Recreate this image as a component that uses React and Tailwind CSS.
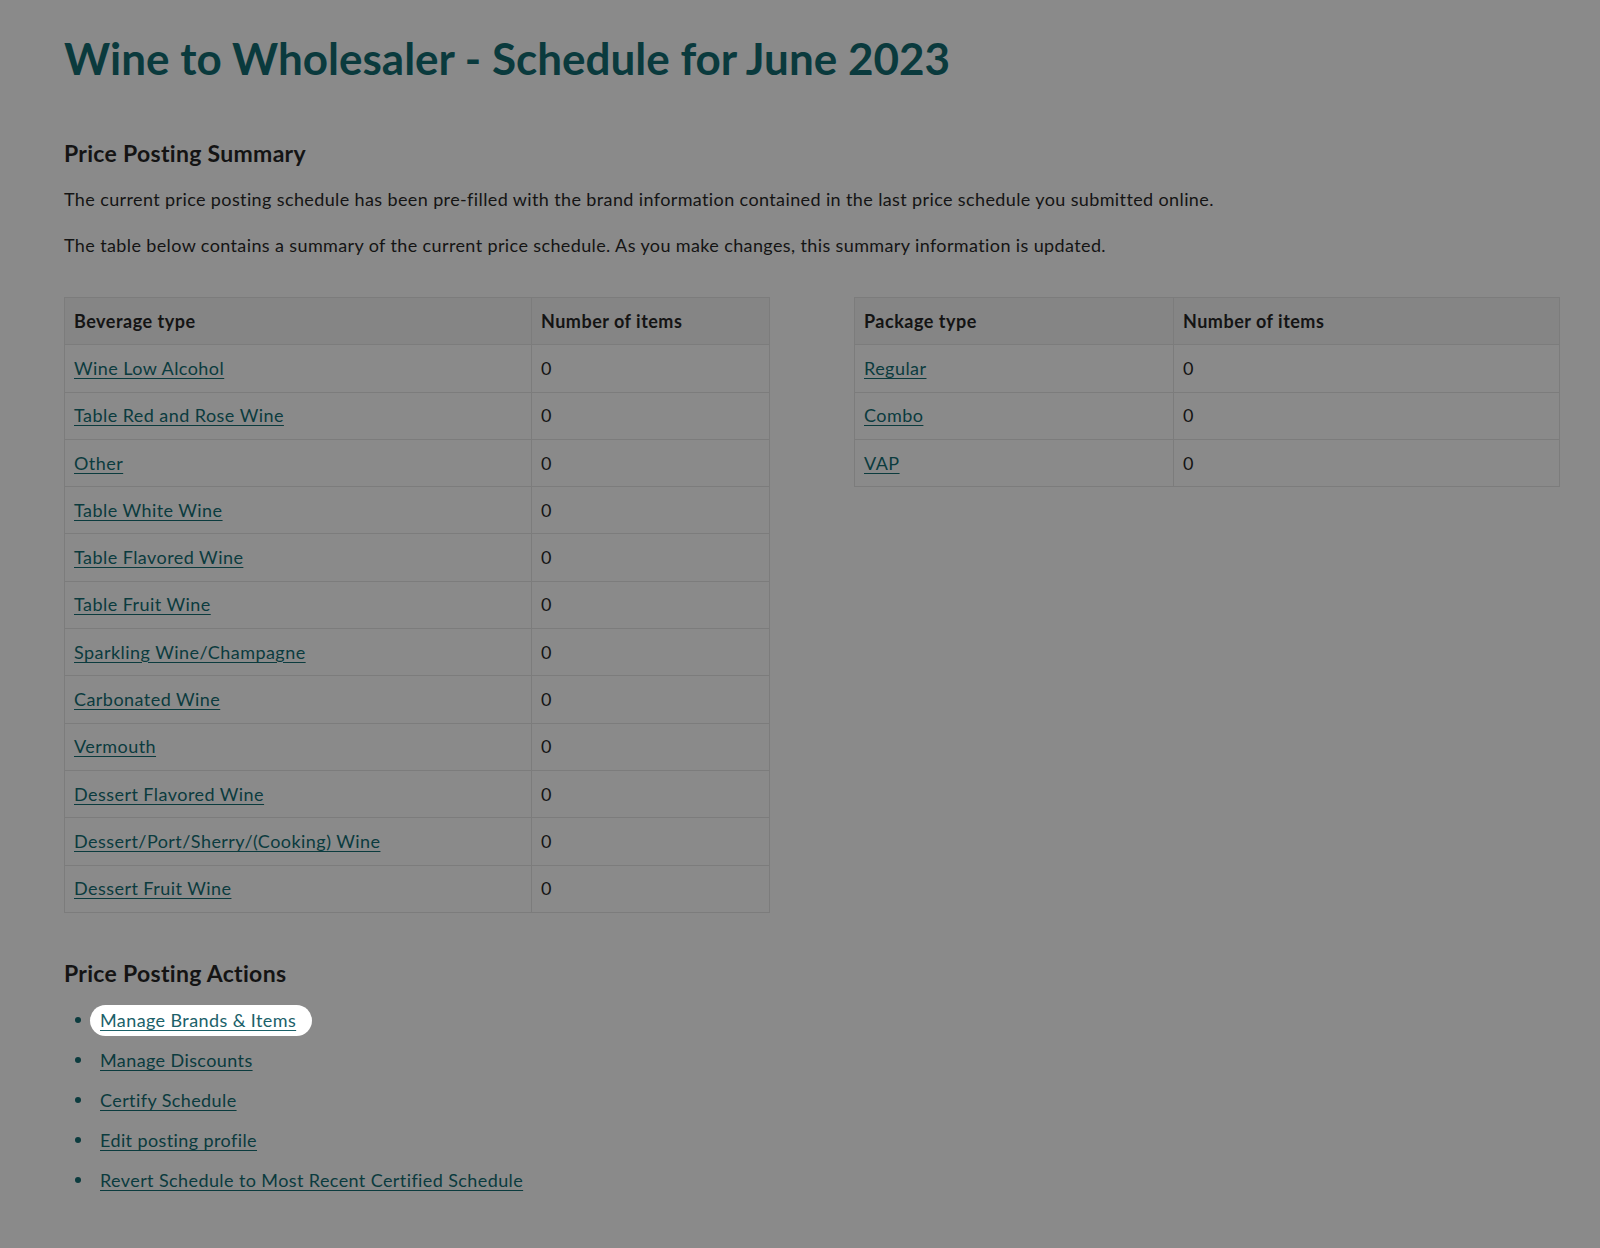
const beverageRows = [
  "Wine Low Alcohol",
  "Table Red and Rose Wine",
  "Other",
  "Table White Wine",
  "Table Flavored Wine",
  "Table Fruit Wine",
  "Sparkling Wine/Champagne",
  "Carbonated Wine",
  "Vermouth",
  "Dessert Flavored Wine",
  "Dessert/Port/Sherry/(Cooking) Wine",
  "Dessert Fruit Wine",
];

const packageRows = ["Regular", "Combo", "VAP"];

const actions = [
  "Manage Brands & Items",
  "Manage Discounts",
  "Certify Schedule",
  "Edit posting profile",
  "Revert Schedule to Most Recent Certified Schedule",
];

function SummaryTable({ label, rows, firstCol }) {
  return (
    <table className="border-collapse border border-[#7c7c7c] w-[706px] text-[18px] text-[#141414]">
      <thead>
        <tr className="bg-[#858585]">
          <th className={`${firstCol} h-[47.3px] px-[9px] text-left font-bold tracking-[0.5px] border border-[#7c7c7c]`}>
            {label}
          </th>
          <th className="h-[47.3px] px-[9px] text-left font-bold tracking-[0.5px] border border-[#7c7c7c]">
            Number of items
          </th>
        </tr>
      </thead>
      <tbody>
        {rows.map((row) => (
          <tr key={row}>
            <td className="h-[47.3px] px-[9px] border border-[#7c7c7c]">
              <a href="#" className="underline underline-offset-[3px] tracking-[0.45px] text-[#0b3b3e]">
                {row}
              </a>
            </td>
            <td className="h-[47.3px] px-[9px] border border-[#7c7c7c]">0</td>
          </tr>
        ))}
      </tbody>
    </table>
  );
}

export default function App() {
  return (
    <div
      className="min-h-[1248px] bg-[#8a8a8a] pl-[64px] pr-[40px] pt-[30px] text-[#141414]"
      style={{ fontFamily: "Lato, 'Noto Sans', sans-serif" }}
    >
      {/* Title */}
      <h1 className="text-[44px] font-bold leading-[56px] text-[#0a3a3d]">
        Wine to Wholesaler - Schedule for June 2023
      </h1>

      {/* Summary */}
      <h2 className="mt-[52px] text-[23px] font-bold leading-[30px] tracking-[0.3px]">
        Price Posting Summary
      </h2>
      <p className="mt-[19px] text-[18px] leading-[24px] tracking-[0.38px]">
        The current price posting schedule has been pre-filled with the brand information
        contained in the last price schedule you submitted online.
      </p>
      <p className="mt-[22px] text-[18px] leading-[24px] tracking-[0.38px]">
        The table below contains a summary of the current price schedule. As you make changes,
        this summary information is updated.
      </p>

      <div className="mt-[40px] flex items-start justify-between">
        <SummaryTable label="Beverage type" rows={beverageRows} firstCol="w-[467px]" />
        <SummaryTable label="Package type" rows={packageRows} firstCol="w-[319px]" />
      </div>

      {/* Actions */}
      <h2 className="mt-[45px] text-[23px] font-bold leading-[30px] tracking-[0.3px]">
        Price Posting Actions
      </h2>
      <ul className="mt-[18px] flex flex-col gap-[11px] text-[18px] tracking-[0.4px]">
        {actions.map((action, i) => (
          <li key={action} className="flex items-center h-[29px]">
            <span className="w-[6px] h-[6px] rounded-full bg-[#0b3b3e] ml-[11px] mr-[19px]" />
            <a
              href="#"
              className={`underline underline-offset-[3px] ${
                i === 0
                  ? "bg-white text-[#1b6169] rounded-full pl-[10px] pr-[16px] py-[2px] -ml-[10px]"
                  : "text-[#0b3b3e]"
              }`}
            >
              {action}
            </a>
          </li>
        ))}
      </ul>
    </div>
  );
}
